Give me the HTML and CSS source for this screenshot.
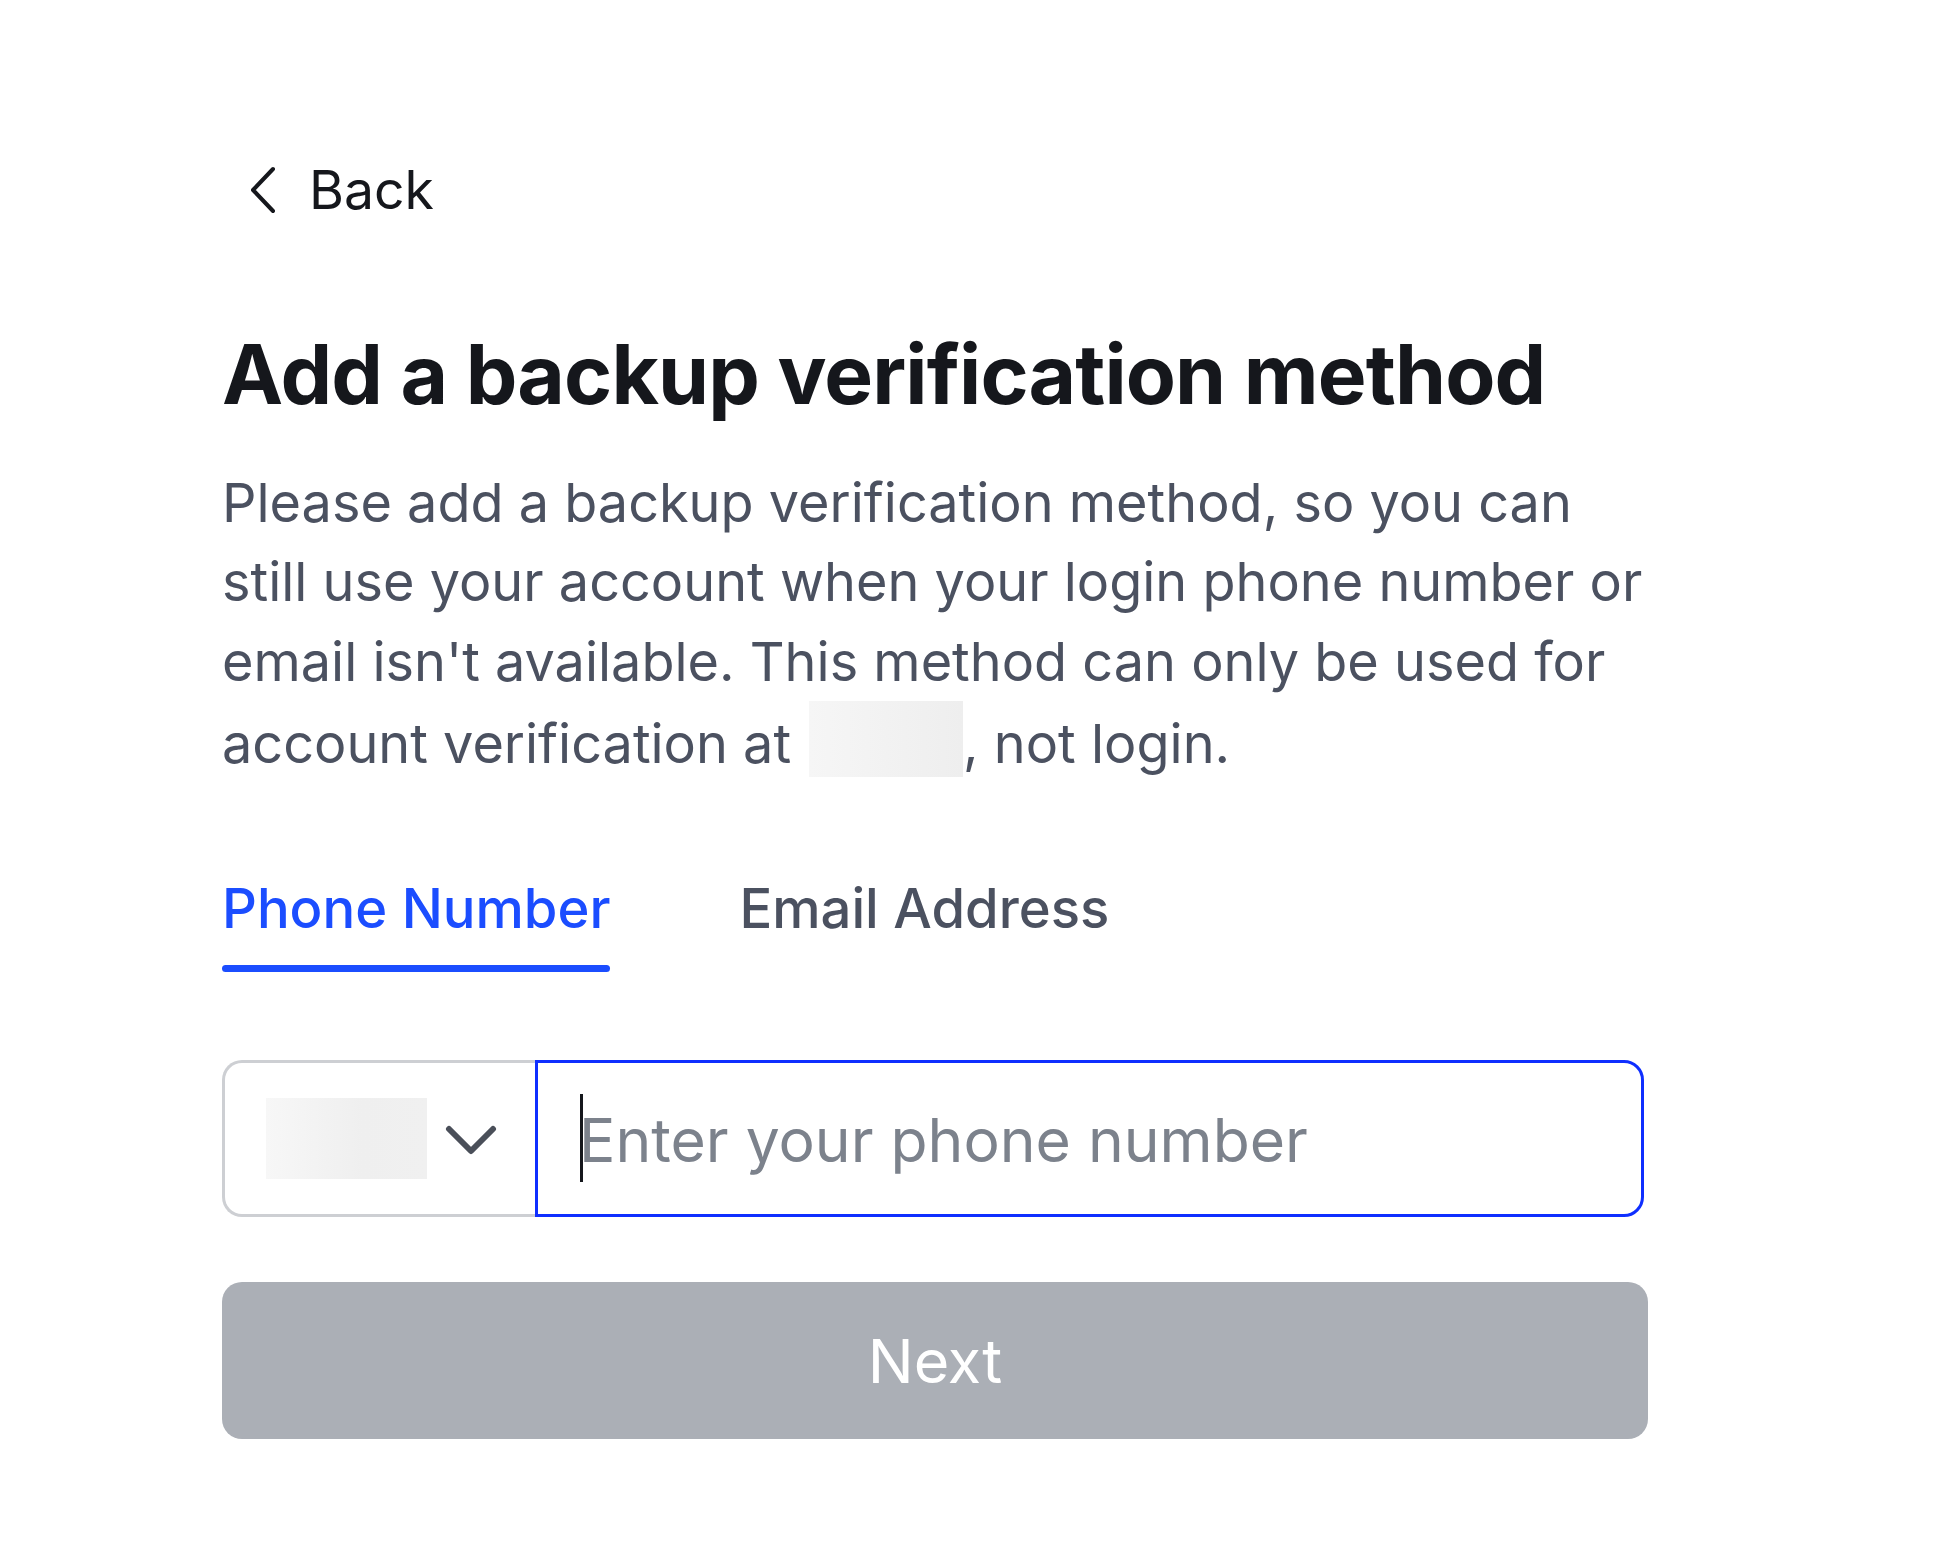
FILE: index.html
```html
<!DOCTYPE html>
<html lang="en">
<head>
<meta charset="utf-8">
<title>Add a backup verification method</title>
<link rel="stylesheet" href="styles.css">
</head>
<body>
<main class="page">
  <a class="back" href="#">
    <svg class="back-icon" viewBox="0 0 30 48" width="30" height="48" aria-hidden="true">
      <path d="M25 3 L5 24 L25 45" fill="none" stroke="#15171c" stroke-width="4" stroke-linecap="round" stroke-linejoin="round"/>
    </svg>
    <span>Back</span>
  </a>

  <h1 class="title">Add a backup verification method</h1>
  <p class="desc">Please add a backup verification method, so you can still use your account when your login phone number or email isn't available. This method can only be used for account verification at<span class="redact"></span>, not login.</p>

  <div class="tabs">
    <div class="tab tab-active">Phone Number</div>
    <div class="tab">Email Address</div>
  </div>

  <div class="field">
    <div class="country">
      <span class="country-blur"></span>
      <svg class="chev" viewBox="0 0 52 30" width="52" height="30" aria-hidden="true">
        <path d="M4 4 L26 26 L48 4" fill="none" stroke="#4a4f59" stroke-width="6" stroke-linecap="round" stroke-linejoin="round"/>
      </svg>
    </div>
    <div class="phone">
      <span class="caret"></span>
      <span class="placeholder">Enter your phone number</span>
    </div>
  </div>

  <button class="next" type="button">Next</button>
</main>
</body>
</html>
```
FILE: styles.css
```css
* { box-sizing: border-box; }
html, body { margin: 0; padding: 0; background: #ffffff; }
body { font-family: Inter, "Noto Sans", "Liberation Sans", sans-serif; }

.page {
  width: 1426px;
  margin-left: 222px;
  padding-top: 160px;
}

.back {
  display: flex;
  align-items: center;
  gap: 31px;
  height: 60px;
  margin-left: 26px;
  color: #15171c;
  text-decoration: none;
  font-size: 53.5px;
  line-height: 60px;
}
.back-icon { display: block; }

.title {
  margin: 105px 0 0;
  font-size: 82px;
  line-height: 100px;
  font-weight: 700;
  color: #15171c;
  letter-spacing: -0.9px;
}

.desc {
  margin: 38px 0 0;
  font-size: 54px;
  line-height: 79.3px;
  color: #4b5160;
  width: 1426px;
}
.redact {
  display: inline-block;
  width: 154px;
  height: 76px;
  vertical-align: -14px;
  background: linear-gradient(90deg, #f6f6f6, #eeeeee);
  margin-left: 18px;
}

.tabs {
  display: flex;
  gap: 129px;
  margin-top: 94px;
}
.tab {
  font-size: 54.4px;
  line-height: 62px;
  font-weight: 500;
  color: #4b5160;
  padding-bottom: 26px;
  position: relative;
}
.tab-active { color: #1b4dff; }
.tab-active::after {
  content: "";
  position: absolute;
  left: 0; right: 0; bottom: -7px;
  height: 7px;
  border-radius: 4px;
  background: #1b4dff;
}

.field {
  display: flex;
  margin-top: 95px;
  width: 1422px;
  height: 157px;
}
.country {
  width: 313px;
  border: 3px solid #cdcfd3;
  border-right: none;
  border-radius: 20px 0 0 20px;
  display: flex;
  align-items: center;
  padding-left: 41px;
  gap: 18px;
}
.country-blur {
  width: 161px;
  height: 81px;
  background: linear-gradient(90deg, #f7f7f7, #efefef 60%, #f0f0f0);
}
.chev { display: block; margin-top: 2px; }

.phone {
  flex: 1;
  border: 3px solid #0f2fff;
  border-radius: 0 20px 20px 0;
  display: flex;
  align-items: center;
  padding-left: 41px;
  position: relative;
}
.caret {
  position: absolute;
  left: 42px;
  top: 31px;
  width: 3px;
  height: 88px;
  background: #15171c;
}
.placeholder {
  font-size: 60.6px;
  color: #7c828c;
  margin-top: 2px;
}

.next {
  display: block;
  margin-top: 65px;
  width: 1426px;
  height: 157px;
  border: none;
  border-radius: 20px;
  background: #abafb6;
  color: #ffffff;
  font-family: Inter, "Noto Sans", "Liberation Sans", sans-serif;
  font-size: 61px;
  padding: 0;
}
```
